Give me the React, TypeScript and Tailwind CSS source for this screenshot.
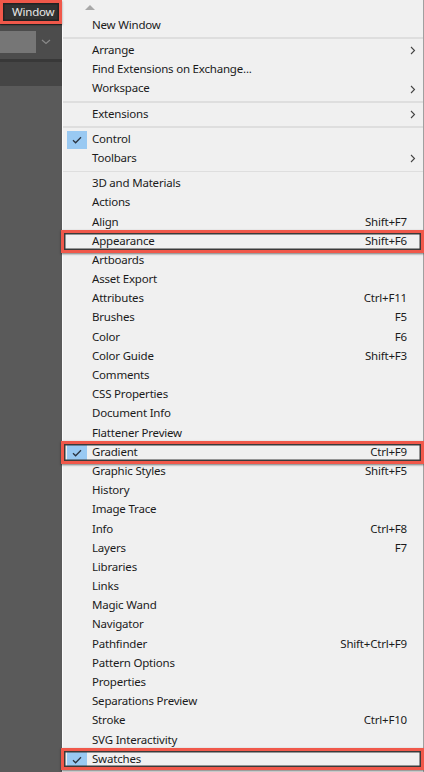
import React from "react";

type Item =
  | { sep: true }
  | { label: string; shortcut?: string; sub?: boolean; checked?: boolean; sep?: false };

const items: Item[] = [
  { label: "New Window" },
  { sep: true },
  { label: "Arrange", sub: true },
  { label: "Find Extensions on Exchange..." },
  { label: "Workspace", sub: true },
  { sep: true },
  { label: "Extensions", sub: true },
  { sep: true },
  { label: "Control", checked: true },
  { label: "Toolbars", sub: true },
  { sep: true },
  { label: "3D and Materials" },
  { label: "Actions" },
  { label: "Align", shortcut: "Shift+F7" },
  { label: "Appearance", shortcut: "Shift+F6" },
  { label: "Artboards" },
  { label: "Asset Export" },
  { label: "Attributes", shortcut: "Ctrl+F11" },
  { label: "Brushes", shortcut: "F5" },
  { label: "Color", shortcut: "F6" },
  { label: "Color Guide", shortcut: "Shift+F3" },
  { label: "Comments" },
  { label: "CSS Properties" },
  { label: "Document Info" },
  { label: "Flattener Preview" },
  { label: "Gradient", shortcut: "Ctrl+F9", checked: true },
  { label: "Graphic Styles", shortcut: "Shift+F5" },
  { label: "History" },
  { label: "Image Trace" },
  { label: "Info", shortcut: "Ctrl+F8" },
  { label: "Layers", shortcut: "F7" },
  { label: "Libraries" },
  { label: "Links" },
  { label: "Magic Wand" },
  { label: "Navigator" },
  { label: "Pathfinder", shortcut: "Shift+Ctrl+F9" },
  { label: "Pattern Options" },
  { label: "Properties" },
  { label: "Separations Preview" },
  { label: "Stroke", shortcut: "Ctrl+F10" },
  { label: "SVG Interactivity" },
  { label: "Swatches", checked: true },
];

function Check() {
  return (
    <svg width="10" height="8" viewBox="0 0 10 8" fill="none">
      <path d="M1 4.2 L3.6 6.8 L9 1.2" stroke="#2b3440" strokeWidth="1.3" />
    </svg>
  );
}

function Chevron() {
  return (
    <svg width="6" height="9" viewBox="0 0 6 9" fill="none">
      <path d="M1 1 L4.5 4.5 L1 8" stroke="#444" strokeWidth="1.1" />
    </svg>
  );
}

function Highlight({ top, height }: { top: number; height: number }) {
  return (
    <div
      className="absolute left-[61px] right-0 border-[3px] border-[#f0584a] shadow-[inset_0_0_0_1.5px_#3a3a3a,0_1px_2px_rgba(0,0,0,0.5)] pointer-events-none"
      style={{ top, height }}
    />
  );
}

export default function App() {
  return (
    <div className="relative w-[424px] h-[772px] overflow-hidden flex font-['Noto_Sans',sans-serif] text-[11.5px] tracking-[-0.2px]">
      {/* left app pane */}
      <div className="w-[62px] shrink-0 flex flex-col bg-[#5a5a5a]">
        <div className="h-[25px] bg-[#323232] flex items-center pl-[12px] pb-[2px] text-[#e8e8e8]">
          Window
        </div>
        <div className="h-[37px] bg-[#4c4c4c] flex items-center border-b-[3px] border-[#383838]">
          <div className="w-[36px] h-[22px] bg-[#767676]" />
          <svg width="10" height="6" viewBox="0 0 10 6" className="ml-[5px]" fill="none">
            <path d="M1 1 L5 4.5 L9 1" stroke="#8a8a8a" strokeWidth="1.2" />
          </svg>
        </div>
        <div className="h-[24px] bg-[#454545]" />
        <div className="flex-1 bg-[#5a5a5a]" />
      </div>

      {/* menu */}
      <div className="flex-1 bg-[#f0f0f0] border-l border-[#fbfbfb] border-r border-r-[#a0a0a0] text-[#1b1b1b] leading-none">
        <div className="h-[16px] pl-[22px] pt-[5px]">
          <svg width="10" height="5" viewBox="0 0 10 5">
            <path d="M0 5 L5 0 L10 5 Z" fill="#a8a8a8" />
          </svg>
        </div>
        {items.map((it, i) =>
          it.sep ? (
            <div key={i} className="h-[6px] flex items-center">
              <div className="w-full h-[1.5px] bg-[#dedede]" />
            </div>
          ) : (
            <div key={i} className="h-[19.2px] flex items-center relative">
              <div className="w-[29px] pl-[4px] h-full flex items-center">
                {it.checked && (
                  <div className="w-[20px] h-[18px] bg-[#99c9f2] flex items-center justify-center">
                    <Check />
                  </div>
                )}
              </div>
              <div className="flex-1 pb-[2px]">{it.label}</div>
              {it.shortcut && <div className="pr-[16px] pb-[2px]">{it.shortcut}</div>}
              {it.sub && (
                <div className="absolute right-[7px] top-[5px]">
                  <Chevron />
                </div>
              )}
            </div>
          )
        )}
      </div>

      {/* callout highlights */}
      <div className="absolute left-0 top-0 w-[62px] h-[24px] border-[3px] border-[#f0584a] shadow-[inset_0_0_0_1.5px_#222,0_1px_2px_rgba(0,0,0,0.5)] pointer-events-none" />
      <Highlight top={230} height={23} />
      <Highlight top={441} height={23} />
      <Highlight top={748} height={22} />
    </div>
  );
}
